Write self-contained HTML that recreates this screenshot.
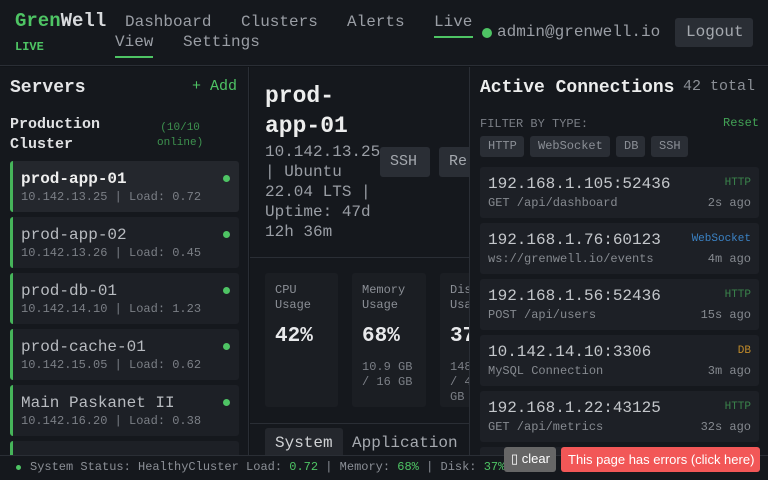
<!DOCTYPE html>
<html><head><style>
*{box-sizing:border-box;margin:0;padding:0}
html,body{width:768px;height:480px;overflow:hidden}
body{background:#111418;font-family:"Liberation Mono",monospace;color:#d8dadd;position:relative}
.a{position:absolute;white-space:nowrap}
.g{color:#4ec464}
.hdr{left:0;top:0;width:768px;height:66px;background:#15181d;border-bottom:1px solid #2a2e35}
.nav{font-size:16px;color:#9a9ea5}
.side{left:0;top:67px;width:249px;height:388px;background:#15181d;border-right:1px solid #2a2e35;overflow:hidden}
.card{position:absolute;left:10px;width:229px;height:51px;background:#1d2026;border-left:3px solid #46b45a;border-radius:3px}
.card .n{position:absolute;left:8px;top:9px;font-size:16px;color:#b8bbc0}
.card .s{position:absolute;left:8px;top:29px;font-size:12px;color:#7b7f86}
.card .d{position:absolute;right:9px;top:14px;width:7px;height:7px;border-radius:50%;background:#4ec464}
.mid{left:250px;top:67px;width:219px;height:388px;background:#15181d;overflow:hidden}
.right{left:469px;top:67px;width:299px;height:388px;background:#15181d;border-left:1px solid #2a2e35;overflow:hidden}
.cc{position:absolute;left:10px;width:279px;height:51px;background:#1d2026;border-radius:3px}
.cc .ip{position:absolute;left:8px;top:8px;font-size:16px;color:#c4c7cb}
.cc .p{position:absolute;left:8px;top:29px;font-size:12px;color:#868a90}
.cc .t{position:absolute;right:8px;top:10px;font-size:11px}
.cc .ago{position:absolute;right:8px;top:29px;font-size:12px;color:#868a90}
.chip{position:absolute;top:69px;height:21px;background:#2a2e35;border-radius:3px;font-size:12px;color:#8b8f96;padding:3px 0 0 8px}
.met{position:absolute;top:206px;height:134px;background:#1b1e23;border-radius:3px;padding:10px}
.met .l{font-size:12px;color:#8b8f96;line-height:15px}
.met .v{font-size:21px;font-weight:bold;color:#e8e9eb;margin-top:12px}
.met .sub{font-size:12px;color:#7b7f86;line-height:15px;margin-top:12px}
</style></head><body>
<div class="a hdr"></div>
<div class="a" style="left:15px;top:10px;font-size:19px;font-weight:bold"><span class="g">Gren</span>Well</div>
<div class="a g" style="left:15px;top:40px;font-size:12px;font-weight:bold">LIVE</div>
<div class="a nav" style="left:125px;top:13px">Dashboard</div>
<div class="a nav" style="left:241px;top:13px">Clusters</div>
<div class="a nav" style="left:347px;top:13px">Alerts</div>
<div class="a nav g" style="left:434px;top:13px">Live</div>
<div class="a" style="left:434px;top:36px;width:39px;height:2px;background:#4ec464"></div>
<div class="a nav g" style="left:115px;top:33px">View</div>
<div class="a" style="left:115px;top:56px;width:38px;height:2px;background:#4ec464"></div>
<div class="a nav" style="left:183px;top:33px">Settings</div>
<div class="a" style="left:482px;top:28px;width:10px;height:10px;border-radius:50%;background:#4ec464"></div>
<div class="a nav" style="left:497px;top:23px">admin@grenwell.io</div>
<div class="a" style="left:675px;top:18px;width:78px;height:29px;background:#2a2e35;border-radius:3px;font-size:16px;color:#a5a9af;padding:5px 0 0 11px">Logout</div>

<div class="a side">
<div class="a" style="left:10px;top:11px;font-size:18px;font-weight:bold;color:#e4e5e7">Servers</div>
<div class="a g" style="left:192px;top:11px;font-size:15px">+ Add</div>
<div class="a" style="left:10px;top:48px;font-size:15px;font-weight:bold;line-height:20px;color:#e0e1e3">Production<br>Cluster</div>
<div class="a g" style="left:157px;top:54px;font-size:11px;line-height:15px;opacity:.7;text-align:center">(10/10<br>online)</div>
<div class="card" style="top:94px;background:#24272d"><div class="n" style="font-weight:bold;color:#eee">prod-app-01</div><div class="s">10.142.13.25 | Load: 0.72</div><div class="d"></div></div>
<div class="card" style="top:150px"><div class="n">prod-app-02</div><div class="s">10.142.13.26 | Load: 0.45</div><div class="d"></div></div>
<div class="card" style="top:206px"><div class="n">prod-db-01</div><div class="s">10.142.14.10 | Load: 1.23</div><div class="d"></div></div>
<div class="card" style="top:262px"><div class="n">prod-cache-01</div><div class="s">10.142.15.05 | Load: 0.62</div><div class="d"></div></div>
<div class="card" style="top:318px"><div class="n">Main Paskanet II</div><div class="s">10.142.16.20 | Load: 0.38</div><div class="d"></div></div>
<div class="card" style="top:374px"></div>
</div>

<div class="a mid">
<div class="a" style="left:15px;top:14px;font-size:23px;font-weight:bold;line-height:30px;color:#eceded">prod-<br>app-01</div>
<div class="a" style="left:15px;top:75px;font-size:16px;line-height:20px;color:#9a9ea5">10.142.13.25<br>| Ubuntu<br>22.04 LTS |<br>Uptime: 47d<br>12h 36m</div>
<div class="a" style="left:130px;top:80px;width:50px;height:30px;background:#2a2e35;border-radius:3px;font-size:15px;color:#a5a9af;padding:6px 0 0 10px">SSH</div>
<div class="a" style="left:189px;top:80px;width:50px;height:30px;background:#2a2e35;border-radius:3px;font-size:15px;color:#a5a9af;padding:6px 0 0 10px">Re</div>
<div class="a" style="left:0;top:190px;width:219px;height:1px;background:#2a2e35"></div>
<div class="met" style="left:15px;width:73px"><div class="l">CPU<br>Usage</div><div class="v">42%</div></div>
<div class="met" style="left:102px;width:74px"><div class="l">Memory<br>Usage</div><div class="v">68%</div><div class="sub">10.9 GB<br>/ 16 GB</div></div>
<div class="met" style="left:190px;width:74px"><div class="l">Disk<br>Usage</div><div class="v">37%</div><div class="sub">148 GB<br>/ 400<br>GB</div></div>
<div class="a" style="left:0;top:356px;width:219px;height:1px;background:#2a2e35"></div>
<div class="a" style="left:15px;top:361px;width:78px;height:30px;background:#24272d;border-radius:3px 3px 0 0;font-size:16px;color:#d0d2d5;padding:6px 0 0 10px">System</div>
<div class="a" style="left:102px;top:367px;font-size:16px;color:#a5a9af">Application</div>
</div>

<div class="a right">
<div class="a" style="left:10px;top:11px;font-size:18px;font-weight:bold;color:#eceded">Active Connections</div>
<div class="a" style="left:213px;top:11px;font-size:15px;color:#8b8f96">42 total</div>
<div class="a" style="left:10px;top:50px;font-size:12px;color:#7b7f86">FILTER BY TYPE:</div>
<div class="a g" style="left:253px;top:49px;font-size:12px;opacity:.8">Reset</div>
<div class="chip" style="left:10px;width:44px">HTTP</div>
<div class="chip" style="left:60px;width:80px">WebSocket</div>
<div class="chip" style="left:146px;width:29px">DB</div>
<div class="chip" style="left:181px;width:37px">SSH</div>
<div class="cc" style="top:100px"><div class="ip">192.168.1.105:52436</div><div class="p">GET /api/dashboard</div><div class="t g" style="opacity:.6">HTTP</div><div class="ago">2s ago</div></div>
<div class="cc" style="top:156px"><div class="ip">192.168.1.76:60123</div><div class="p">ws://grenwell.io/events</div><div class="t" style="color:#3b82c4">WebSocket</div><div class="ago">4m ago</div></div>
<div class="cc" style="top:212px"><div class="ip">192.168.1.56:52436</div><div class="p">POST /api/users</div><div class="t g" style="opacity:.6">HTTP</div><div class="ago">15s ago</div></div>
<div class="cc" style="top:268px"><div class="ip">10.142.14.10:3306</div><div class="p">MySQL Connection</div><div class="t" style="color:#c08a2a">DB</div><div class="ago">3m ago</div></div>
<div class="cc" style="top:324px"><div class="ip">192.168.1.22:43125</div><div class="p">GET /api/metrics</div><div class="t g" style="opacity:.6">HTTP</div><div class="ago">32s ago</div></div>
<div class="cc" style="top:380px"></div>
</div>

<div class="a" style="left:0;top:455px;width:768px;height:25px;background:#15181d;border-top:1px solid #2a2e35"></div>
<div class="a" style="left:16px;top:465px;width:5px;height:5px;border-radius:50%;background:#4ec464"></div>
<div class="a" style="left:30px;top:460px;font-size:12px;color:#8b8f96">System Status: HealthyCluster Load: <span class="g">0.72</span> | Memory: <span class="g">68%</span> | Disk: <span class="g">37%</span></div>
<div class="a" style="left:504px;top:447px;width:52px;height:25px;background:#666;border-radius:3px;font-family:'Liberation Sans',sans-serif;font-size:13px;color:#fff;padding:4px 0 0 7px">▯ clear</div>
<div class="a" style="left:561px;top:447px;width:199px;height:25px;background:#f25757;border-radius:3px;font-family:'Liberation Sans',sans-serif;font-size:13px;color:#fff;padding:5px 0 0 7px">This page has errors (click here)</div>
</body></html>
